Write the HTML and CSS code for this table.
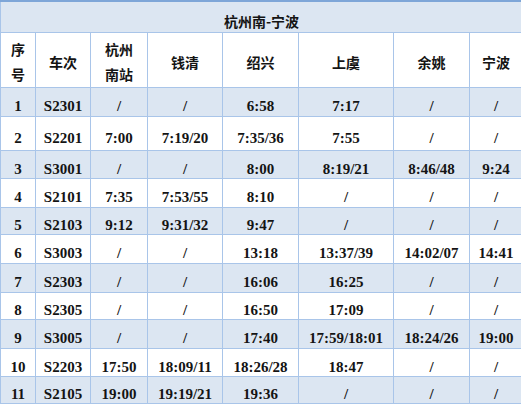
FILE: index.html
```html
<!DOCTYPE html>
<html lang="zh-CN">
<head>
<meta charset="utf-8">
<title>杭州南-宁波</title>
<link rel="stylesheet" href="styles.css">
</head>
<body>
<table class="timetable">
  <colgroup>
    <col class="c-no"><col class="c-train"><col class="c-hzn"><col class="c-qq"><col class="c-sx"><col class="c-sy"><col class="c-yy"><col class="c-nb">
  </colgroup>
  <thead>
    <tr class="title-row"><th colspan="8" class="title">杭州南-宁波</th></tr>
    <tr class="head-row">
      <th>序<br>号</th><th>车次</th><th>杭州<br>南站</th><th>钱清</th><th>绍兴</th><th>上虞</th><th>余姚</th><th>宁波</th>
    </tr>
  </thead>
  <tbody>
    <tr><td>1</td><td>S2301</td><td>/</td><td>/</td><td>6:58</td><td>7:17</td><td>/</td><td>/</td></tr>
    <tr><td>2</td><td>S2201</td><td>7:00</td><td>7:19/20</td><td>7:35/36</td><td>7:55</td><td>/</td><td>/</td></tr>
    <tr><td>3</td><td>S3001</td><td>/</td><td>/</td><td>8:00</td><td>8:19/21</td><td>8:46/48</td><td>9:24</td></tr>
    <tr><td>4</td><td>S2101</td><td>7:35</td><td>7:53/55</td><td>8:10</td><td>/</td><td>/</td><td>/</td></tr>
    <tr><td>5</td><td>S2103</td><td>9:12</td><td>9:31/32</td><td>9:47</td><td>/</td><td>/</td><td>/</td></tr>
    <tr><td>6</td><td>S3003</td><td>/</td><td>/</td><td>13:18</td><td>13:37/39</td><td>14:02/07</td><td>14:41</td></tr>
    <tr><td>7</td><td>S2303</td><td>/</td><td>/</td><td>16:06</td><td>16:25</td><td>/</td><td>/</td></tr>
    <tr><td>8</td><td>S2305</td><td>/</td><td>/</td><td>16:50</td><td>17:09</td><td>/</td><td>/</td></tr>
    <tr><td>9</td><td>S3005</td><td>/</td><td>/</td><td>17:40</td><td>17:59/18:01</td><td>18:24/26</td><td>19:00</td></tr>
    <tr><td>10</td><td>S2203</td><td>17:50</td><td>18:09/11</td><td>18:26/28</td><td>18:47</td><td>/</td><td>/</td></tr>
    <tr><td>11</td><td>S2105</td><td>19:00</td><td>19:19/21</td><td>19:36</td><td>/</td><td>/</td><td>/</td></tr>
  </tbody>
</table>
</body>
</html>
```

FILE: styles.css
```css
html, body {
  margin: 0;
  padding: 0;
  background: #ffffff;
  overflow: hidden;
}

.timetable {
  border-collapse: collapse;
  table-layout: fixed;
  width: 522px;
  font-family: "Liberation Serif", "Noto Sans CJK SC", serif;
  font-weight: 700;
  font-size: 15px;
  color: #141414;
  border-top: 2px solid #7ea6d8;
}

.c-no { width: 35px; }
.c-train { width: 55px; }
.c-hzn { width: 57px; }
.c-qq { width: 75px; }
.c-sx { width: 76px; }
.c-sy { width: 95px; }
.c-yy { width: 76px; }
.c-nb { width: 53px; }

.timetable th,
.timetable td {
  border: 1px solid #a9c5e9;
  text-align: center;
  vertical-align: middle;
  padding: 8px 0 0 0;
  white-space: nowrap;
}

.timetable th {
  font-family: "Noto Sans CJK SC", sans-serif;
  font-size: 14px;
  font-weight: 700;
}

.title-row th {
  height: 23px;
  padding-top: 7px;
  line-height: 18px;
  background: #dce6f2;
}

.head-row th {
  height: 50px;
  padding-top: 4px;
  line-height: 25px;
  background: #ffffff;
}

.timetable td {
  line-height: 16px;
  height: 20px;
}

.timetable tbody tr:nth-child(odd) td {
  background: #dce6f2;
}

.timetable tbody tr:nth-child(2) td { height: 25px; }
.timetable tbody tr:nth-child(5) td,
.timetable tbody tr:nth-child(8) td,
.timetable tbody tr:nth-child(11) td { height: 18px; }
.timetable tbody tr:nth-child(3) td,
.timetable tbody tr:nth-child(10) td { height: 19px; }
```
